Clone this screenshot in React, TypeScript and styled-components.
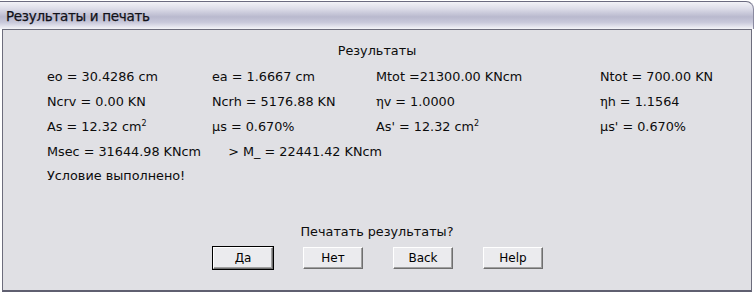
import styled, { createGlobalStyle } from "styled-components";

const Global = createGlobalStyle`
    html, body {
        margin: 0;
        padding: 0;
        background: #ffffff;
    }
    body {
        width: 754px;
        height: 292px;
        overflow: hidden;
        font-family: Tahoma, "DejaVu Sans", sans-serif;
    }
`;

const Window = styled.div`
    width: 754px;
    height: 292px;
    box-sizing: border-box;
    display: flex;
    flex-direction: column;
    background: #ffffff;
`;

const TitleBar = styled.div`
    height: 28px;
    box-sizing: border-box;
    margin-top: 1px;
    border-top: 1px solid #6b6b80;
    border-right: 1px solid #8a8aa0;
    border-top-right-radius: 8px;
    background: linear-gradient(
        to bottom,
        #f2f2f7 0%,
        #dcdce8 25%,
        #b9b9ce 55%,
        #c8c8da 75%,
        #f4f4f8 100%
    );
    display: flex;
    align-items: center;
    padding-left: 6px;
    font-size: 13.5px;
    font-weight: normal;
    color: #111118;
    letter-spacing: -0.3px;
    -webkit-text-stroke: 0.25px #111118;
`;

const Panel = styled.div`
    flex: 1;
    margin: 0 2px 0 2px;
    box-sizing: border-box;
    border: 1px solid #6d6d7c;
    border-bottom: 2px solid #5f5f70;
    background: #e0e0e4;
    display: flex;
    flex-direction: column;
    padding: 12px 0 0 44px;
    font-size: 12.8px;
    color: #0c0c0c;
`;

const Heading = styled.div`
    text-align: center;
    margin-left: -44px;
    height: 18px;
    line-height: 18px;
`;

const Grid = styled.div`
    display: grid;
    grid-template-columns: 165px 164px 224px auto;
    grid-auto-rows: 25px;
    align-items: center;
    margin-top: 4px;
`;

const Cell = styled.div<{ $span?: number }>`
    white-space: nowrap;
    grid-column: span ${(p) => p.$span ?? 1};
`;

const Note = styled.div`
    height: 22px;
    line-height: 22px;
    margin-top: 1px;
`;

const Question = styled.div`
    text-align: center;
    margin: 36px 0 0 -44px;
    height: 18px;
    line-height: 18px;
`;

const ButtonRow = styled.div`
    display: flex;
    gap: 30px;
    margin: 6px 0 0 166px;
`;

const Button = styled.button<{ $default?: boolean }>`
    width: 60px;
    height: 22px;
    box-sizing: border-box;
    padding: 0;
    background: #ebebee;
    font-family: Tahoma, "DejaVu Sans", sans-serif;
    font-size: 12px;
    color: #000;
    border: 1px solid;
    border-color: #ffffff #6f6f6f #6f6f6f #ffffff;
    box-shadow: ${(p) =>
        p.$default
            ? "0 0 0 1px #000, inset -1px -1px 0 #a0a0a0"
            : "inset -1px -1px 0 #a0a0a0"};
`;

const Sup = styled.sup`
    font-size: 8px;
    vertical-align: 5px;
    line-height: 0;
`;

const Eta = styled.span`
    font-family: "DejaVu Serif", serif;
`;

export default function App() {
    return (
        <Window>
            <Global />
            <TitleBar>Результаты и печать</TitleBar>
            <Panel>
                <Heading>Результаты</Heading>
                <Grid>
                    <Cell>eo = 30.4286 cm</Cell>
                    <Cell>ea = 1.6667 cm</Cell>
                    <Cell>Mtot =21300.00 KNcm</Cell>
                    <Cell>Ntot = 700.00 KN</Cell>

                    <Cell>Ncrv = 0.00 KN</Cell>
                    <Cell>Ncrh = 5176.88 KN</Cell>
                    <Cell><Eta>η</Eta>v = 1.0000</Cell>
                    <Cell><Eta>η</Eta>h = 1.1564</Cell>

                    <Cell>As = 12.32 cm<Sup>2</Sup></Cell>
                    <Cell>μs = 0.670%</Cell>
                    <Cell>As' = 12.32 cm<Sup>2</Sup></Cell>
                    <Cell>μs' = 0.670%</Cell>

                    <Cell>Msec = 31644.98 KNcm</Cell>
                    <Cell $span={3}>&nbsp;&nbsp;&nbsp;&nbsp;&gt; M_ = 22441.42 KNcm</Cell>
                </Grid>
                <Note>Условие выполнено!</Note>
                <Question>Печатать результаты?</Question>
                <ButtonRow>
                    <Button $default>Да</Button>
                    <Button>Нет</Button>
                    <Button>Back</Button>
                    <Button>Help</Button>
                </ButtonRow>
            </Panel>
        </Window>
    );
}
